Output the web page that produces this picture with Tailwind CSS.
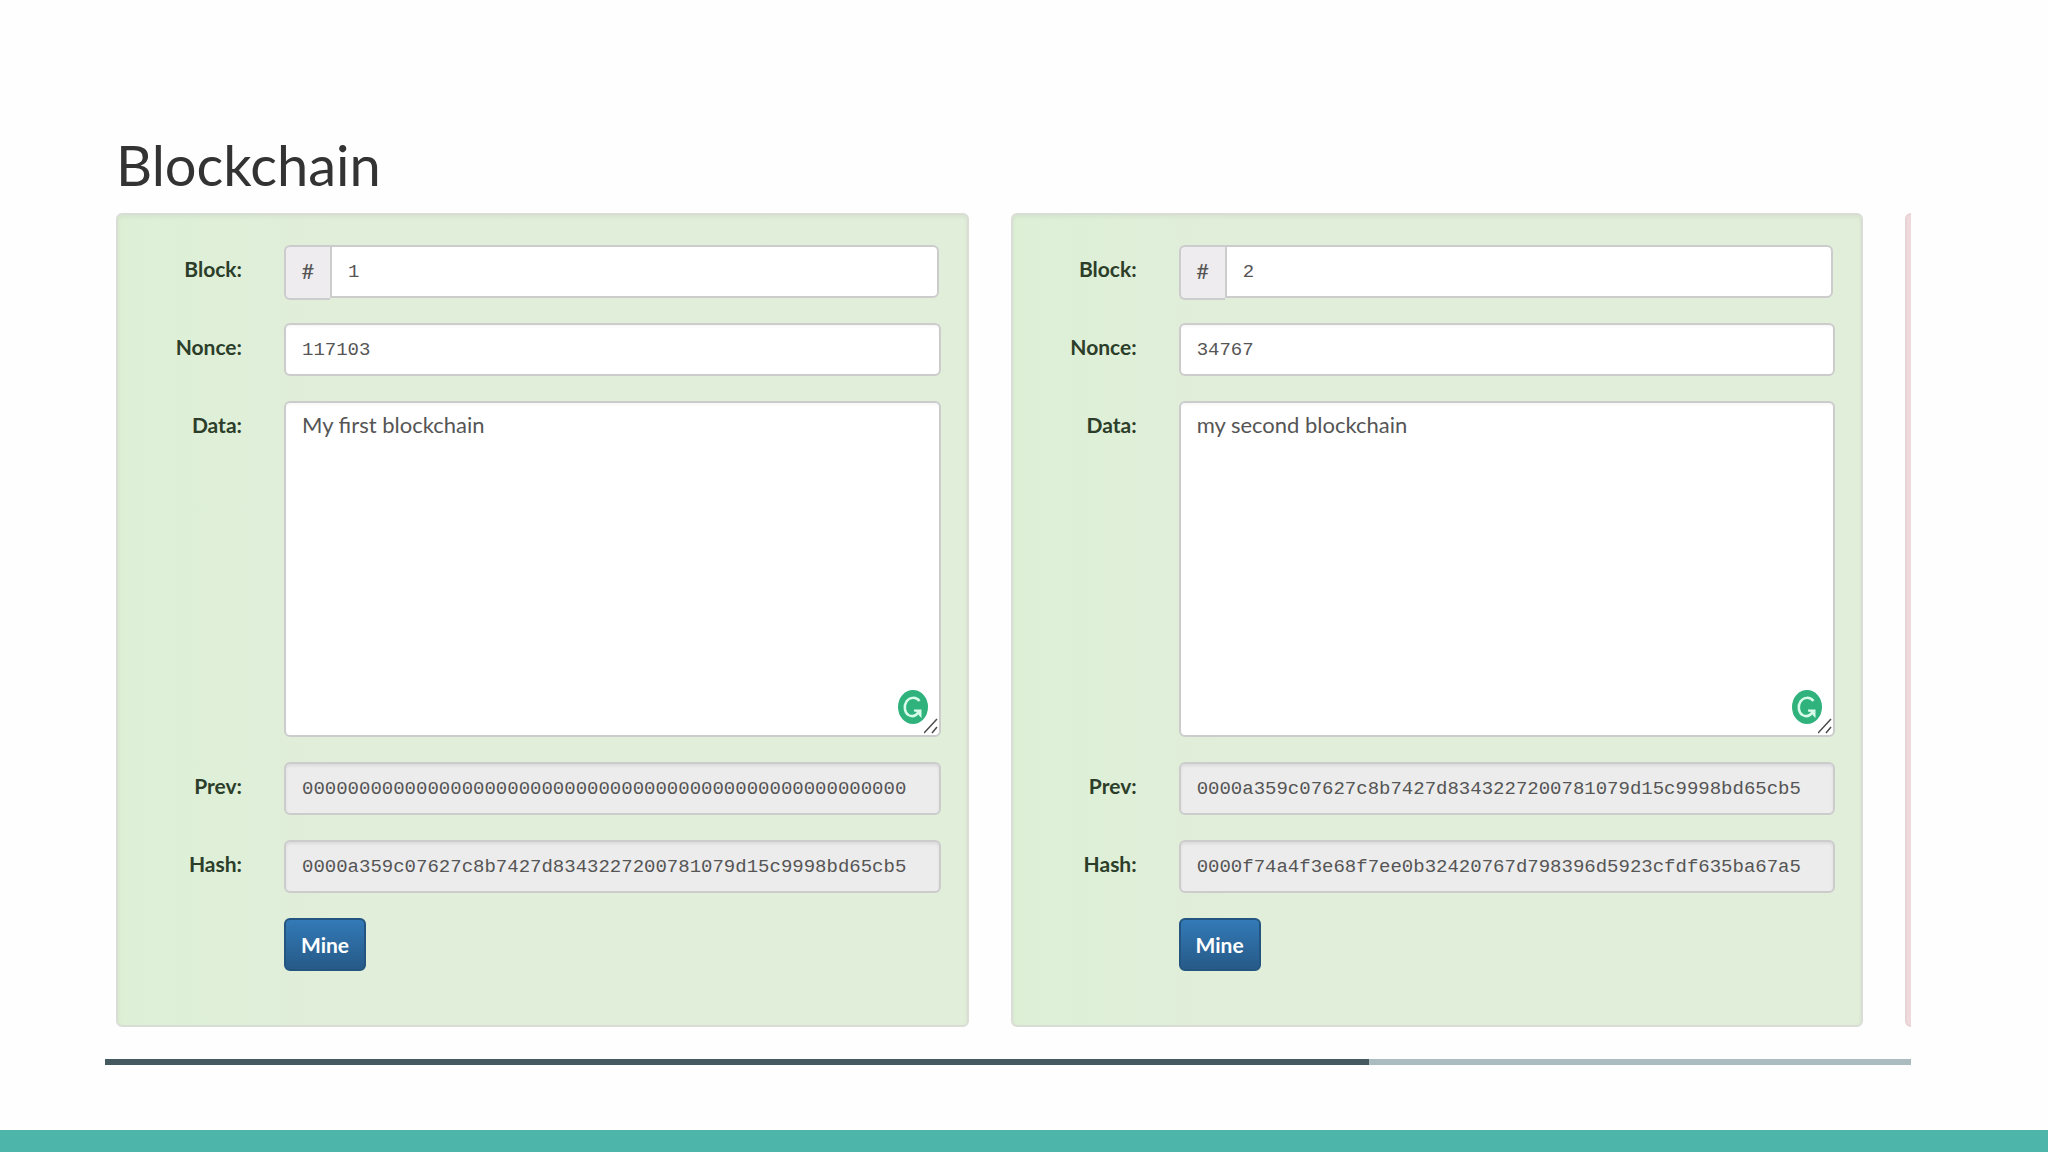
<!DOCTYPE html>
<html lang="en">
<head>
    <meta charset="UTF-8">
    <meta name="viewport" content="width=device-width, initial-scale=1.0">
    <title>Blockchain</title>
    <script src="https://cdn.jsdelivr.net/npm/@tailwindcss/browser@4"></script>
</head>

<body class="bg-[#fefefe] min-h-screen flex flex-col font-[Lato,sans-serif] text-[22px] leading-7 text-[#555555]">
    <main class="flex-1 pl-[105px] pr-[137px] pt-[128px]">
        <h1 class="ml-[11px] h-[85px] text-[56px] leading-[74px] text-[#333333]">Blockchain</h1>

        <div class="ml-[11px] flex gap-[42px] overflow-hidden">
            <!-- Block 1 -->
            <form class="w-[47.5%] shrink-0 rounded-md border-2 border-[#d9ddd6] bg-linear-to-r from-[#ddf0d6] to-[#e1eeda] to-25% shadow-[inset_0_2px_4px_#0000000d] pt-[30px] pb-[54px] pr-[26px] flex flex-col gap-[25px]">
                <div class="flex gap-[42px]">
                    <label for="block1" class="w-[124px] pt-[10px] text-right text-[21px] leading-7 font-bold text-[#2c3e2a]">Block:</label>
                    <div class="-mb-[2px] mr-[2px] flex flex-1 min-w-0">
                        <span class="flex h-[55px] w-[46px] items-center justify-center rounded-l-md border-2 border-r-0 border-[#cccccc] bg-[#eeecee] pb-1">#</span>
                        <input id="block1" type="number" value="1" class="h-[53px] min-w-0 flex-1 appearance-none rounded-r-md border-2 border-[#cccccc] bg-white px-4 font-['Liberation_Mono',monospace] text-[19px]">
                    </div>
                </div>
                <div class="flex gap-[42px]">
                    <label for="nonce1" class="w-[124px] pt-[10px] text-right text-[21px] leading-7 font-bold text-[#2c3e2a]">Nonce:</label>
                    <input id="nonce1" type="text" value="117103" class="h-[53px] min-w-0 flex-1 rounded-md border-2 border-[#cccccc] bg-white px-4 font-['Liberation_Mono',monospace] text-[19px] shadow-[inset_0_2px_2px_#00000008]">
                </div>
                <div class="flex gap-[42px]">
                    <label for="data1" class="w-[124px] pt-[10px] text-right text-[21px] leading-7 font-bold text-[#2c3e2a]">Data:</label>
                    <div class="relative flex flex-1 min-w-0">
                        <textarea id="data1" class="h-[336px] w-full resize-none rounded-md border-2 border-[#cccccc] bg-white px-4 py-2 shadow-[inset_0_2px_2px_#00000008]">My first blockchain</textarea>
                        <svg class="absolute right-[13px] bottom-[13px] h-[34px] w-[30px]" viewBox="0 0 30 34" fill="none">
                            <ellipse cx="15" cy="17" rx="15" ry="17" fill="#2fb27c"/>
                            <path d="M21.5 11C18 6.5 11.5 7 8.5 11.5C5.5 16 6.5 22.5 10.5 25C14 27 18 26 21 21.5" stroke="#d8fbea" stroke-width="2.5"/>
                            <path d="M16 19.5H23.5V28L21 25.5L19 22L16 21.5Z" fill="#d8fbea"/>
                        </svg>
                        <svg class="absolute right-[3px] bottom-[3px] h-4 w-[14px]" viewBox="0 0 14 16" stroke="#4a4a4a" stroke-width="1.5">
                            <path d="M0 15L13 1M8 15L13 9"/>
                        </svg>
                    </div>
                </div>
                <div class="flex gap-[42px]">
                    <label for="prev1" class="w-[124px] pt-[10px] text-right text-[21px] leading-7 font-bold text-[#2c3e2a]">Prev:</label>
                    <input id="prev1" type="text" readonly value="00000000000000000000000000000000000000000000000000000" class="h-[53px] min-w-0 flex-1 rounded-md border-2 border-[#cccccc] bg-[#ececec] px-4 font-['Liberation_Mono',monospace] text-[19px] shadow-[inset_0_2px_3px_#00000013]">
                </div>
                <div class="flex gap-[42px]">
                    <label for="hash1" class="w-[124px] pt-[10px] text-right text-[21px] leading-7 font-bold text-[#2c3e2a]">Hash:</label>
                    <input id="hash1" type="text" readonly value="0000a359c07627c8b7427d8343227200781079d15c9998bd65cb5" class="h-[53px] min-w-0 flex-1 rounded-md border-2 border-[#cccccc] bg-[#ececec] px-4 font-['Liberation_Mono',monospace] text-[19px] shadow-[inset_0_2px_3px_#00000013]">
                </div>
                <div class="pl-[166px]">
                    <button type="button" class="block h-[53px] w-[82px] rounded-md border-2 border-[#245580] bg-linear-to-b from-[#337ab7] to-[#265a88] text-center text-[21px] font-bold text-white">Mine</button>
                </div>
            </form>

            <!-- Block 2 -->
            <form class="w-[47.5%] shrink-0 rounded-md border-2 border-[#d9ddd6] bg-linear-to-r from-[#ddf0d6] to-[#e1eeda] to-25% shadow-[inset_0_2px_4px_#0000000d] pt-[30px] pb-[54px] pr-[26px] flex flex-col gap-[25px]">
                <div class="flex gap-[42px]">
                    <label for="block2" class="w-[124px] pt-[10px] text-right text-[21px] leading-7 font-bold text-[#2c3e2a]">Block:</label>
                    <div class="-mb-[2px] mr-[2px] flex flex-1 min-w-0">
                        <span class="flex h-[55px] w-[46px] items-center justify-center rounded-l-md border-2 border-r-0 border-[#cccccc] bg-[#eeecee] pb-1">#</span>
                        <input id="block2" type="number" value="2" class="h-[53px] min-w-0 flex-1 appearance-none rounded-r-md border-2 border-[#cccccc] bg-white px-4 font-['Liberation_Mono',monospace] text-[19px]">
                    </div>
                </div>
                <div class="flex gap-[42px]">
                    <label for="nonce2" class="w-[124px] pt-[10px] text-right text-[21px] leading-7 font-bold text-[#2c3e2a]">Nonce:</label>
                    <input id="nonce2" type="text" value="34767" class="h-[53px] min-w-0 flex-1 rounded-md border-2 border-[#cccccc] bg-white px-4 font-['Liberation_Mono',monospace] text-[19px] shadow-[inset_0_2px_2px_#00000008]">
                </div>
                <div class="flex gap-[42px]">
                    <label for="data2" class="w-[124px] pt-[10px] text-right text-[21px] leading-7 font-bold text-[#2c3e2a]">Data:</label>
                    <div class="relative flex flex-1 min-w-0">
                        <textarea id="data2" class="h-[336px] w-full resize-none rounded-md border-2 border-[#cccccc] bg-white px-4 py-2 shadow-[inset_0_2px_2px_#00000008]">my second blockchain</textarea>
                        <svg class="absolute right-[13px] bottom-[13px] h-[34px] w-[30px]" viewBox="0 0 30 34" fill="none">
                            <ellipse cx="15" cy="17" rx="15" ry="17" fill="#2fb27c"/>
                            <path d="M21.5 11C18 6.5 11.5 7 8.5 11.5C5.5 16 6.5 22.5 10.5 25C14 27 18 26 21 21.5" stroke="#d8fbea" stroke-width="2.5"/>
                            <path d="M16 19.5H23.5V28L21 25.5L19 22L16 21.5Z" fill="#d8fbea"/>
                        </svg>
                        <svg class="absolute right-[3px] bottom-[3px] h-4 w-[14px]" viewBox="0 0 14 16" stroke="#4a4a4a" stroke-width="1.5">
                            <path d="M0 15L13 1M8 15L13 9"/>
                        </svg>
                    </div>
                </div>
                <div class="flex gap-[42px]">
                    <label for="prev2" class="w-[124px] pt-[10px] text-right text-[21px] leading-7 font-bold text-[#2c3e2a]">Prev:</label>
                    <input id="prev2" type="text" readonly value="0000a359c07627c8b7427d8343227200781079d15c9998bd65cb5" class="h-[53px] min-w-0 flex-1 rounded-md border-2 border-[#cccccc] bg-[#ececec] px-4 font-['Liberation_Mono',monospace] text-[19px] shadow-[inset_0_2px_3px_#00000013]">
                </div>
                <div class="flex gap-[42px]">
                    <label for="hash2" class="w-[124px] pt-[10px] text-right text-[21px] leading-7 font-bold text-[#2c3e2a]">Hash:</label>
                    <input id="hash2" type="text" readonly value="0000f74a4f3e68f7ee0b32420767d798396d5923cfdf635ba67a5" class="h-[53px] min-w-0 flex-1 rounded-md border-2 border-[#cccccc] bg-[#ececec] px-4 font-['Liberation_Mono',monospace] text-[19px] shadow-[inset_0_2px_3px_#00000013]">
                </div>
                <div class="pl-[166px]">
                    <button type="button" class="block h-[53px] w-[82px] rounded-md border-2 border-[#245580] bg-linear-to-b from-[#337ab7] to-[#265a88] text-center text-[21px] font-bold text-white">Mine</button>
                </div>
            </form>

            <!-- Block 3, scrolled out of view -->
            <div class="w-[47.5%] shrink-0 rounded-md border-2 border-[#e6d3d5] bg-[#f0d9da]"></div>
        </div>

        <!-- horizontal scroll position -->
        <div class="mt-8 h-[6px] bg-[#abbcc1]">
            <div class="h-full w-[70%] bg-[#455a60]"></div>
        </div>
    </main>
    <footer class="h-[22px] bg-[#4db5a9]"></footer>
</body>
</html>
